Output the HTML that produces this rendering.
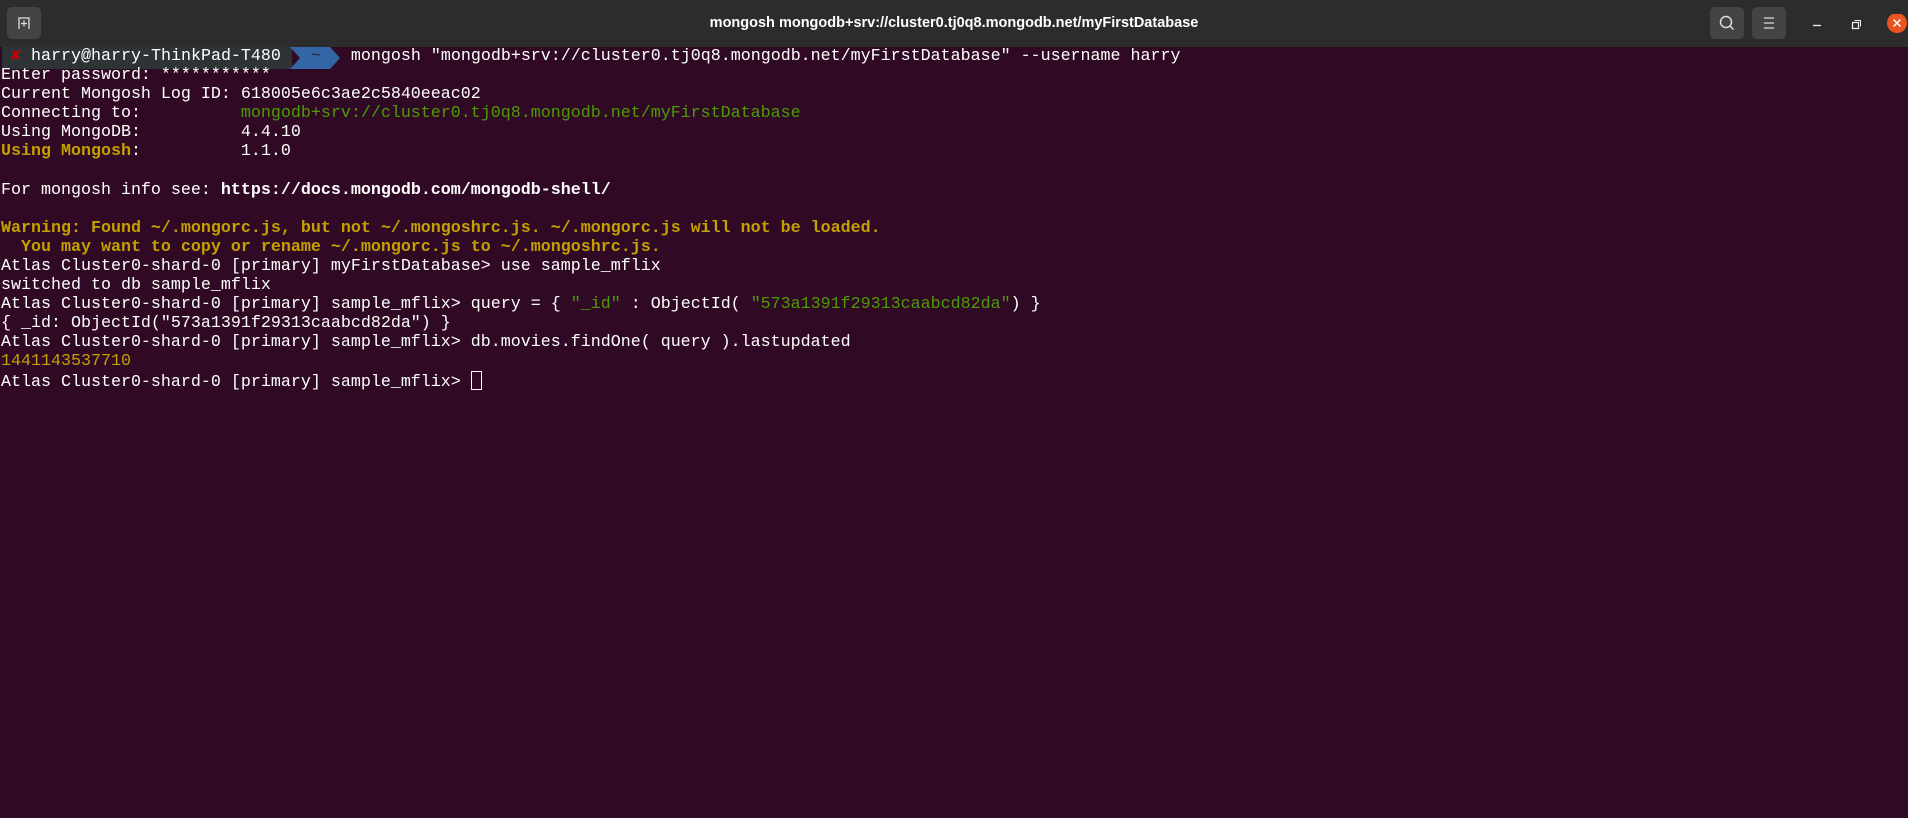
<!DOCTYPE html>
<html><head><meta charset="utf-8"><style>
html,body{margin:0;padding:0;width:1908px;height:818px;overflow:hidden;background:#300a24;}
#tb{position:absolute;left:0;top:0;width:1908px;height:47px;background:#2c2c2c;}
.btn{position:absolute;top:7px;width:34px;height:32px;background:#444;border-radius:5px;}
#title{position:absolute;left:0;width:1908px;top:0;height:47px;text-align:center;color:#fff;font:bold 14.5px "Liberation Sans",sans-serif;line-height:46px;}
#term{position:absolute;left:1px;top:47px;font-family:"Liberation Mono",monospace;font-size:16.67px;line-height:19.08px;color:#fff;white-space:pre;}
.g{color:#4e9a06}.y{color:#c4a000}.b{font-weight:bold}
.yb{color:#c4a000;font-weight:bold}
</style></head><body>
<div id="tb">
<div class="btn" style="left:7px"><svg width="34" height="32"><path d="M12 22V11h10v11M14 16.5h6M17 13.5v6" stroke="#ddd" stroke-width="1.3" fill="none"/></svg></div>
<div id="title">mongosh mongodb+srv://cluster0.tj0q8.mongodb.net/myFirstDatabase</div>
<div class="btn" style="left:1710px"><svg width="34" height="32"><circle cx="16" cy="15" r="5.5" stroke="#ddd" stroke-width="1.5" fill="none"/><path d="M20 19l3.5 3.5" stroke="#ddd" stroke-width="1.5"/></svg></div>
<div class="btn" style="left:1752px"><svg width="34" height="32"><path d="M12 11h10M12 16h10M12 21h10" stroke="#ddd" stroke-width="1.3"/></svg></div>
<svg style="position:absolute;left:1808px;top:14px" width="100" height="22"><path d="M5 11.5h8" stroke="#eee" stroke-width="1.3"/><rect x="44.5" y="8.5" width="6" height="6" stroke="#eee" stroke-width="1.3" fill="none"/><path d="M46.5 6.5h6v6" stroke="#eee" stroke-width="1" fill="none"/><circle cx="89" cy="9" r="10" fill="#e95420"/><path d="M85.5 5.5l7 7M92.5 5.5l-7 7" stroke="#fff" stroke-width="1.5"/></svg>
</div>
<svg style="position:absolute;left:0;top:47px" width="345" height="22"><rect x="2" y="0" width="290" height="22" fill="#2e3436"/><path d="M290 0h40l10 11-10 11h-40l10-11z" fill="#3465a4"/></svg>
<div id="term"> <span style="color:#cc0000">✘</span> harry@harry-ThinkPad-T480   <span style="color:#1e2a33">~</span>   mongosh "mongodb+srv://cluster0.tj0q8.mongodb.net/myFirstDatabase" --username harry
Enter password: ***********
Current Mongosh Log ID: 618005e6c3ae2c5840eeac02
Connecting to:          <span class="g">mongodb+srv://cluster0.tj0q8.mongodb.net/myFirstDatabase</span>
Using MongoDB:          4.4.10
<span class="yb">Using Mongosh</span>:          1.1.0

For mongosh info see: <span class="b">https://docs.mongodb.com/mongodb-shell/</span>

<span class="yb">Warning: Found ~/.mongorc.js, but not ~/.mongoshrc.js. ~/.mongorc.js will not be loaded.
  You may want to copy or rename ~/.mongorc.js to ~/.mongoshrc.js.</span>
Atlas Cluster0-shard-0 [primary] myFirstDatabase&gt; use sample_mflix
switched to db sample_mflix
Atlas Cluster0-shard-0 [primary] sample_mflix&gt; query = { <span class="g">"_id"</span> : ObjectId( <span class="g">"573a1391f29313caabcd82da"</span>) }
{ _id: ObjectId("573a1391f29313caabcd82da") }
Atlas Cluster0-shard-0 [primary] sample_mflix&gt; db.movies.findOne( query ).lastupdated
<span class="y">1441143537710</span>
Atlas Cluster0-shard-0 [primary] sample_mflix&gt; <span style="display:inline-block;width:9px;height:17px;border:1px solid #fff;vertical-align:-4px;line-height:0"></span></div>
</body></html>
